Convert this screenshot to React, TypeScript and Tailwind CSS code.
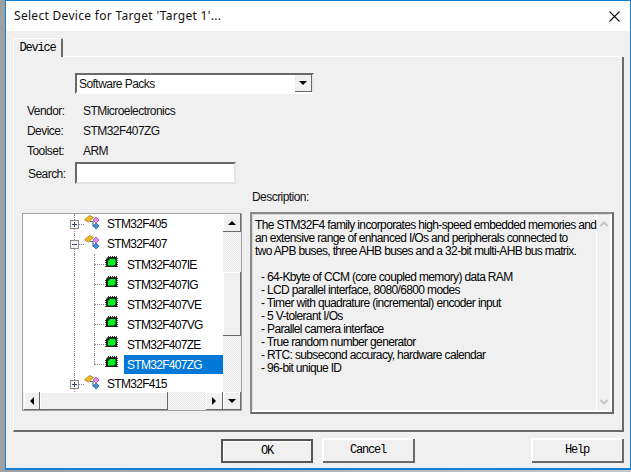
import type { ReactNode } from 'react';

const sans = { fontFamily: '"Liberation Sans", Arial, sans-serif' };
const mono = { fontFamily: '"Liberation Mono", "Courier New", monospace' };

const descTop = [
  'The STM32F4 family incorporates high-speed embedded memories and',
  'an extensive range of enhanced I/Os and peripherals connected to',
  'two APB buses, three AHB buses and a 32-bit multi-AHB bus matrix.',
];
const descList = [
  '64-Kbyte of CCM (core coupled memory) data RAM',
  'LCD parallel interface, 8080/6800 modes',
  'Timer with quadrature (incremental) encoder input',
  '5 V-tolerant I/Os',
  'Parallel camera interface',
  'True random number generator',
  'RTC: subsecond accuracy, hardware calendar',
  '96-bit unique ID',
];
const chips = ['STM32F407IE', 'STM32F407IG', 'STM32F407VE', 'STM32F407VG', 'STM32F407ZE', 'STM32F407ZG'];

function Arrow({ dir, color = '#000' }: { dir: 'up' | 'down' | 'left' | 'right'; color?: string }) {
  const pts = { up: '1,7 5,3 9,7', down: '1,3 5,7 9,3', left: '7,1 3,5 7,9', right: '3,1 7,5 3,9' }[dir];
  return <svg width="10" height="10" viewBox="0 0 10 10"><polygon points={pts} fill={color} /></svg>;
}

function ScrollBtn({ dir, className }: { dir: 'up' | 'down' | 'left' | 'right'; className: string }) {
  return (
    <div className={`flex items-center justify-center bg-[#f0f0f0] border-b border-r border-[#696969] shadow-[inset_1px_1px_0_#fff] ${className}`}>
      <Arrow dir={dir} />
    </div>
  );
}

function GroupIcon() {
  return (
    <svg width="17" height="16" viewBox="0 0 17 16" className="shrink-0">
      <path d="M7 6.5H10V11H11" fill="none" stroke="#55677f" strokeWidth="1.2" />
      <path d="M1.5 4.8L6.5 0.4L10.4 2.4L5.4 7.2Z" fill="#f2b91e" stroke="#96720f" strokeWidth="0.7" />
      <path d="M10 5L13 2L16 5L13 8Z" fill="#ee86ea" stroke="#9a4f9a" strokeWidth="0.7" />
      <path d="M10 11L13 8L16 11L13 14Z" fill="#3d93e2" stroke="#24588e" strokeWidth="0.7" />
    </svg>
  );
}

function ChipIcon() {
  return (
    <svg width="13" height="12" viewBox="0 0 13 12" className="shrink-0">
      <rect x="1" y="1" width="11" height="10" fill="#222" />
      <path d="M3.5 0V1M5.5 0V1M7.5 0V1M9.5 0V1M11.5 0V1" stroke="#333" strokeWidth="1" />
      <path d="M12 2.5H13M12 4.5H13M12 6.5H13M12 8.5H13M12 10.5H13" stroke="#555" strokeWidth="1" />
      <path d="M0 4.5H1M0 6.5H1M0 8.5H1M0 10.5H1" stroke="#333" strokeWidth="1" />
      <path d="M1 1H3L1 3Z" fill="#f0f0f0" />
      <path d="M5 3H10.5V8L9 9.5H3V5Z" fill="#00f020" />
    </svg>
  );
}

function Expander({ open }: { open: boolean }) {
  return (
    <div className="relative w-[9px] h-[9px] bg-[#f4f4f4] border border-[#8c8c8c] flex items-center justify-center">
      <div className="w-[5px] h-px bg-[#33466e]" />
      {!open && <div className="absolute w-px h-[5px] bg-[#33466e]" />}
    </div>
  );
}

// one tree column: dotted line down the middle, optionally stopping half way
function Guide({ half, children, stub }: { half?: boolean; children?: ReactNode; stub?: string }) {
  return (
    <div className="relative w-[20px] h-full shrink-0 flex items-center justify-center">
      <div className={`absolute left-[10px] top-0 border-l border-dotted border-[#8f8f8f] ${half ? 'h-1/2' : 'h-full'}`} />
      {stub && <div className={`absolute left-[10px] top-1/2 border-t border-dotted border-[#8f8f8f] ${stub}`} />}
      {children && <div className="relative">{children}</div>}
    </div>
  );
}

function GroupRow({ label, open }: { label: string; open: boolean }) {
  return (
    <div className="h-[20px] flex items-center pl-[41px] shrink-0">
      <Guide stub="w-[10px]"><Expander open={open} /></Guide>
      <div className="-ml-[1px] -mt-[2px] flex"><GroupIcon /></div>
      <span className="ml-[7px] text-[12px] tracking-[-0.7px] text-black">{label}</span>
    </div>
  );
}

function ChipRow({ label, last, selected }: { label: string; last: boolean; selected: boolean }) {
  return (
    <div className="h-[20px] flex items-center pl-[41px] shrink-0">
      <Guide />
      <Guide half={last} stub="w-[12px]" />
      <div className="ml-[1px] -mt-[4px] flex"><ChipIcon /></div>
      <span className={`ml-[6px] h-[19px] mt-px flex items-center px-[3px] text-[12px] tracking-[-0.7px] w-[99px] ${selected ? 'bg-[#0078d7] text-white' : 'text-black'}`}>{label}</span>
    </div>
  );
}

function Tree() {
  const track = 'bg-[repeating-conic-gradient(#e2e2e2_0_25%,#fff_0_50%)] bg-[length:2px_2px]';
  return (
    <div className="w-[220px] h-[198px] border border-[#a0a0a0] flex bg-white">
      <div className="w-[200px] flex flex-col">
        <div className="h-[178px] overflow-hidden flex flex-col">
          <GroupRow label="STM32F405" open={false} />
          <GroupRow label="STM32F407" open />
          {chips.map((c, i) => (
            <ChipRow key={c} label={c} last={i === chips.length - 1} selected={i === chips.length - 1} />
          ))}
          <GroupRow label="STM32F415" open={false} />
        </div>
        <div className={`h-[18px] flex ${track}`}>
          <ScrollBtn dir="left" className="w-[16px] ml-px" />
          <div className="w-[128px] bg-[#f0f0f0] border-b border-r border-[#696969] shadow-[inset_1px_1px_0_#fff]" />
          <div className="flex-1" />
          <ScrollBtn dir="right" className="w-[17px]" />
        </div>
      </div>
      <div className={`w-[18px] flex flex-col ${track}`}>
        <ScrollBtn dir="up" className="h-[18px]" />
        <div className="h-[40px]" />
        <div className="h-[64px] bg-[#f0f0f0] border-b border-r border-[#696969] shadow-[inset_1px_1px_0_#fff]" />
        <div className="flex-1" />
        <ScrollBtn dir="down" className="h-[18px]" />
      </div>
    </div>
  );
}

function Description() {
  return (
    <div className="w-[364px] h-[202px] border-2 border-t-[#8a8a8a] border-l-[#8a8a8a] border-r-[#696969] border-b-[#696969] flex shadow-[inset_-2px_-2px_0_#fff,inset_1px_1px_0_#d8d8d8]">
      <div className="flex-1 pl-[3px] pt-[5px] text-[12px] leading-[13px] tracking-[-0.65px] text-black border-r border-white mb-[2px]" style={sans}>
        {descTop.map((l) => <div key={l} className="whitespace-nowrap">{l}</div>)}
        <div className="h-[13px]" />
        {descList.map((l) => <div key={l} className="whitespace-nowrap pl-[6px]">- {l}</div>)}
      </div>
      <div className="w-[19px] mr-[2px] flex flex-col justify-between items-center py-[6px]">
        <svg width="10" height="8" viewBox="0 0 10 8"><path d="M1.5 6L5 2.5L8.5 6" fill="none" stroke="#c4c4c4" strokeWidth="2" /></svg>
        <svg width="10" height="8" viewBox="0 0 10 8"><path d="M1.5 2L5 5.5L8.5 2" fill="none" stroke="#c4c4c4" strokeWidth="2" /></svg>
      </div>
    </div>
  );
}

function DialogButton({ label, primary }: { label: string; primary?: boolean }) {
  return (
    <button
      className={`w-[92px] h-[24px] bg-[#f0f0f0] text-[12px] tracking-[-1.2px] text-black flex items-center justify-center ${primary ? 'border-2 border-[#555] shadow-[inset_1px_1px_0_#fff]' : 'border-b-2 border-r-2 border-[#696969] shadow-[inset_1px_1px_0_#fff,-1px_-1px_0_#fff]'}`}
      style={mono}
    >
      {label}
    </button>
  );
}

function InfoRow({ label, value }: { label: string; value: string }) {
  return (
    <div className="h-[20px] flex items-center pl-[13px]">
      <span className="w-[56px]">{label}</span>
      <span>{value}</span>
    </div>
  );
}

export default function App() {
  return (
    <div className="w-[631px] h-[472px] overflow-hidden bg-[linear-gradient(90deg,#a0a0a0,#c8c8c8)] pl-[5px]" style={sans}>
      <div className="w-[626px] h-[470px] border-x border-t border-b-2 border-[#1380d8] bg-[#f0f0f0] flex flex-col">
        <div className="h-[30px] shrink-0 bg-white flex items-center justify-between pl-[8px] pr-[10px]">
          <span className="text-[12px] tracking-[0.3px] text-[#111]" style={{ fontFamily: '"Noto Sans", sans-serif' }}>Select Device for Target 'Target 1'...</span>
          <svg width="11" height="11" viewBox="0 0 11 11"><path d="M0.5 0.5L10.5 10.5M10.5 0.5L0.5 10.5" stroke="#111" strokeWidth="1.1" /></svg>
        </div>

        <div className="pl-[7px] pt-[7px] flex flex-col">
          <div className="h-[19px] flex items-end">
            <div className="w-[50px] h-[19px] border-t border-l border-white border-r-2 border-r-[#696969] rounded-t-[2px] flex items-center justify-center text-[12px] tracking-[-1.2px] text-black" style={mono}>
              Device
            </div>
            <div className="w-[560px] border-b border-white" />
          </div>

          <div className="w-[611px] h-[375px] border-l border-l-white border-r-2 border-b-2 border-[#696969] pt-[16px] text-[12px] tracking-[-0.55px] text-[#111]">
            <div className="ml-[61px] w-[239px] h-[21px] border-2 border-t-[#696969] border-l-[#696969] border-r-[#e8e8e8] border-b-white bg-white flex items-center justify-between pl-[2px]">
              <span>Software Packs</span>
              <div className="w-[17px] h-[17px] bg-[#f0f0f0] border-b border-r border-[#696969] flex items-center justify-center"><Arrow dir="down" /></div>
            </div>

            <div className="mt-[7px]">
              <InfoRow label="Vendor:" value="STMicroelectronics" />
              <InfoRow label="Device:" value="STM32F407ZG" />
              <InfoRow label="Toolset:" value="ARM" />
            </div>

            <div className="mt-[1px] h-[22px] flex items-center pl-[14px]">
              <span className="w-[47px] mt-[2px]">Search:</span>
              <div className="w-[161px] h-[22px] border-2 border-t-[#696969] border-l-[#696969] border-r-[#e4e4e4] border-b-[#e4e4e4] bg-white" />
            </div>

            <div className="flex mt-[5px]">
              <div className="ml-[8px] mt-[24px]"><Tree /></div>
              <div className="ml-[8px] flex flex-col">
                <span className="h-[15px] mb-[8px] pl-[2px] flex items-center">Description:</span>
                <Description />
              </div>
            </div>
          </div>

          <div className="w-[611px] mt-[7px] flex gap-[10px]">
            <div className="ml-[208px]"><DialogButton label="OK" primary /></div>
            <DialogButton label="Cancel" />
            <div className="ml-auto"><DialogButton label="Help" /></div>
          </div>
        </div>
      </div>
    </div>
  );
}
